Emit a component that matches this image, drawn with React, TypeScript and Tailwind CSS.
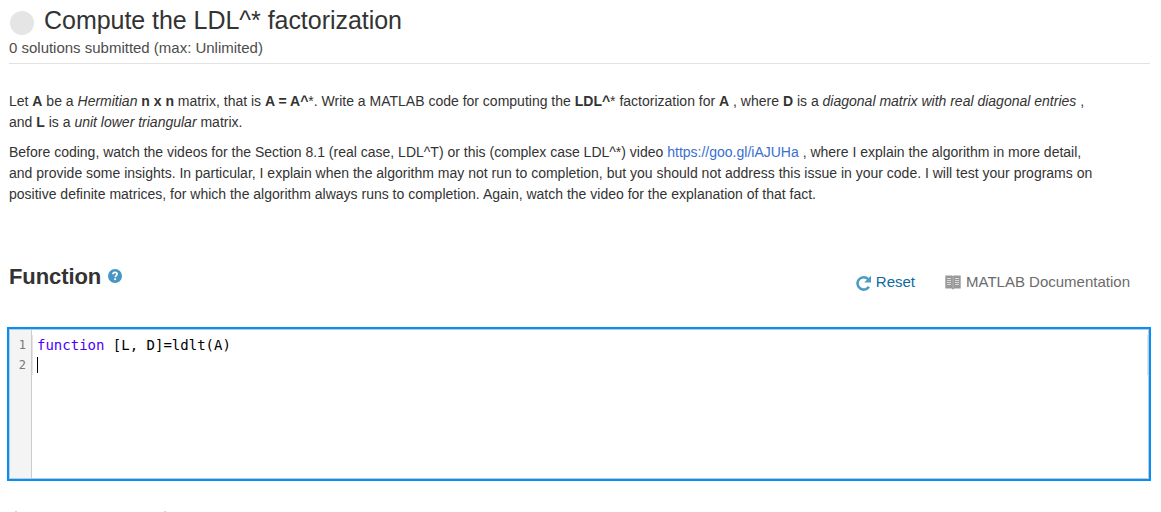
import React from "react";

const ResetIcon: React.FC = () => (
  <svg className="w-4 h-4 mt-[3px] ml-px -mr-px" viewBox="0 0 16 16" fill="none">
    <path
      d="M12.9 11.8A6.2 6.2 0 1 1 12.2 4.1"
      stroke="#4f9bc4"
      strokeWidth="2.6"
    />
    <path d="M15 0.8V7.6H8.2Z" fill="#4f9bc4" />
  </svg>
);

const BookIcon: React.FC = () => (
  <svg className="w-4 h-[15px] mt-[3px]" viewBox="0 0 16 15">
    <path d="M0.3 0.5H7.2L8 1.1L8.8 0.5H15.7V13.5H9.3L8 14.8L6.7 13.5H0.3Z" fill="#999999" />
    <path
      d="M2 3.5H6M2 5.5H6M2 7.5H6M2 9.5H6M10 3.5H14M10 5.5H14M10 7.5H14M10 9.5H14"
      stroke="#dedede"
      strokeWidth="0.9"
    />
    <path d="M8 1.5V13.5" stroke="#b8b8b8" strokeWidth="0.8" />
  </svg>
);

const HelpIcon: React.FC = () => (
  <svg className="w-[14px] h-[14px]" viewBox="0 0 14 14" fill="none">
    <circle cx="7" cy="7" r="7" fill="#4795c2" />
    <path
      d="M4.9 5.3C5 3.9 5.9 3.4 7 3.4C8.3 3.4 9.1 4.1 9.1 5.1C9.1 6.5 7.2 6.6 7.2 8.3"
      stroke="#ffffff"
      strokeWidth="1.7"
    />
    <path d="M6.2 9.3H8.1V11.1H6.2Z" fill="#ffffff" />
  </svg>
);

const Header: React.FC = () => (
  <header className="h-16 border-b border-[#e2e2e2]">
    <div className="flex h-[38px] items-start">
      <div className="w-6 h-6 mt-[11px] ml-px rounded-full bg-[#e5e5e5]" />
      <h1 className="ml-[10px] mt-[5px] text-[25px] leading-[30px] tracking-[-0.04px] text-[#333333]">
        Compute the LDL^* factorization
      </h1>
    </div>
    <p className="text-[15px] leading-5 tracking-[-0.01px] text-[#4d4d4d]">
      0 solutions submitted (max: Unlimited)
    </p>
  </header>
);

const Description: React.FC = () => (
  <section className="mt-[27px] text-[14px] leading-[21px] text-[#333333]">
    <p>
      <span className="block">
        Let <b>A</b> be a <i>Hermitian</i> <b>n x n</b> matrix, that is <b>A = A^</b>*. Write a
        MATLAB code for computing the <b>LDL^</b>* factorization for <b>A</b> , where <b>D</b> is a{" "}
        <i>diagonal matrix with real diagonal entries</i> ,
      </span>
      <span className="block">
        and <b>L</b> is a <i>unit lower triangular</i> matrix.
      </span>
    </p>
    <p className="mt-[9px]">
      <span className="block">
        Before coding, watch the videos for the Section 8.1 (real case, LDL^T) or this (complex case
        LDL^*) video <a className="text-[#3a6fd0]">https://goo.gl/iAJUHa</a> , where I explain the
        algorithm in more detail,
      </span>
      <span className="block">
        and provide some insights. In particular, I explain when the algorithm may not run to
        completion, but you should not address this issue in your code. I will test your programs on
      </span>
      <span className="block">
        positive definite matrices, for which the algorithm always runs to completion. Again, watch
        the video for the explanation of that fact.
      </span>
    </p>
  </section>
);

const Editor: React.FC = () => (
  <div className="-ml-[2px] mt-[24px] h-[154px] w-[1144px] border-2 border-[#0090ff]">
    <div className="flex h-full border border-[#c8c8c8] bg-white font-['DejaVu_Sans_Mono',monospace]">
      <div className="w-[22px] border-r border-[#cccccc] bg-[#f4f4f4] pt-[5px] pr-[5px] text-right text-[12px] leading-5 text-[#777777]">
        <div>1</div>
        <div>2</div>
      </div>
      <div className="h-10 mt-[5px] flex-1 border-x border-[#e3e3e3] pl-[4px] text-[14px] leading-5 text-black">
        <div className="h-5">
          <span className="text-[#4a00ff]">function</span> [L, D]=ldlt(A)
        </div>
        <div className="h-4 mt-[2px] w-px bg-black" />
      </div>
    </div>
  </div>
);

const App: React.FC = () => {
  return (
    <div className="h-[512px] w-[1161px] overflow-hidden bg-white pl-[9px] pr-[11px] whitespace-nowrap font-['Liberation_Sans',Arial,sans-serif]">
      <Header />
      <Description />

      <div className="mt-[58px] flex h-[40px] items-start">
        <h2 className="text-[22px] leading-7 font-bold tracking-[-0.1px] text-[#333333]">Function</h2>
        <div className="ml-[7px] mt-[6px]">
          <HelpIcon />
        </div>
        <div className="ml-auto mr-[20px] mt-[9px] flex text-[15px] leading-5">
          <a className="flex gap-[5px] text-[#0b6a9d]">
            <ResetIcon />
            Reset
          </a>
          <a className="ml-[30px] flex gap-[5px] text-[#6b6b6b]">
            <BookIcon />
            MATLAB Documentation
          </a>
        </div>
      </div>

      <Editor />

      {/* tops of the next heading, cut by the viewport */}
      <div className="mt-[30px] flex h-px">
        <span className="ml-[6px] h-px w-[2px] bg-[#d4d4d4]" />
        <span className="ml-[147px] h-px w-[2px] bg-[#d4d4d4]" />
      </div>
    </div>
  );
};

export default App;
